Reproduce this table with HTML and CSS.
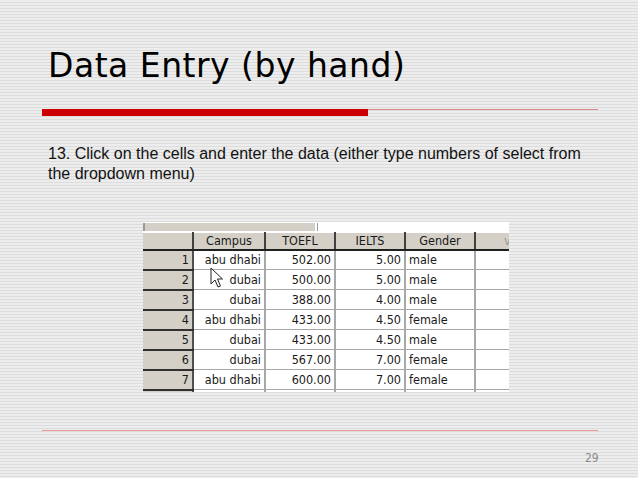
FILE: index.html
```html
<!DOCTYPE html>
<html>
<head>
<meta charset="utf-8">
<link rel="stylesheet" href="styles.css">
</head>
<body>
<div class="slide">
  <h1 class="title">Data Entry (by hand)</h1>
  <div class="rule">
    <div class="rule-thick"></div>
    <div class="rule-thin"></div>
  </div>
  <p class="text">13. Click on the cells and enter the data (either type numbers of select from the dropdown menu)</p>
  <div class="sheet">
    <div class="scrollstrip">
      <div class="scrollbar"></div>
      <div class="scrolltick"></div>
    </div>
    <table class="grid">
      <colgroup>
        <col class="c-num"><col class="c-campus"><col class="c-toefl"><col class="c-ielts"><col class="c-gender"><col class="c-var">
      </colgroup>
      <thead>
        <tr>
          <th class="corner"></th>
          <th>Campus</th>
          <th>TOEFL</th>
          <th>IELTS</th>
          <th>Gender</th>
          <th class="var">v</th>
        </tr>
      </thead>
      <tbody>
        <tr><td class="num">1</td><td class="r">abu dhabi</td><td class="r">502.00</td><td class="r">5.00</td><td class="l">male</td><td></td></tr>
        <tr><td class="num">2</td><td class="r">dubai</td><td class="r">500.00</td><td class="r">5.00</td><td class="l">male</td><td></td></tr>
        <tr><td class="num">3</td><td class="r">dubai</td><td class="r">388.00</td><td class="r">4.00</td><td class="l">male</td><td></td></tr>
        <tr><td class="num">4</td><td class="r">abu dhabi</td><td class="r">433.00</td><td class="r">4.50</td><td class="l">female</td><td></td></tr>
        <tr><td class="num">5</td><td class="r">dubai</td><td class="r">433.00</td><td class="r">4.50</td><td class="l">male</td><td></td></tr>
        <tr><td class="num">6</td><td class="r">dubai</td><td class="r">567.00</td><td class="r">7.00</td><td class="l">female</td><td></td></tr>
        <tr><td class="num">7</td><td class="r">abu dhabi</td><td class="r">600.00</td><td class="r">7.00</td><td class="l">female</td><td></td></tr>
        <tr><td class="num">8</td><td class="r">abu dhabi</td><td class="r">600.00</td><td class="r">7.00</td><td class="l">male</td><td></td></tr>
      </tbody>
    </table>
    <svg class="cursor" width="13" height="22" viewBox="0 0 13 22">
      <path d="M1 1 L1 17 L5 13 L8 20 L10.5 19 L7.5 12 L12.5 12 Z" fill="#fff" stroke="#222" stroke-width="1" stroke-linejoin="miter"/>
    </svg>
  </div>
  <div class="footer-rule"></div>
  <div class="pagenum">29</div>
</div>
</body>
</html>
```

FILE: styles.css
```css
html, body {
  margin: 0;
  padding: 0;
}
body {
  width: 638px;
  height: 478px;
  overflow: hidden;
  background: repeating-linear-gradient(to bottom, #ededed 0px, #ededed 2px, #dcdcdc 2px, #dcdcdc 3px);
}
.slide {
  position: relative;
  width: 638px;
  height: 478px;
  padding-top: 47px;
  box-sizing: border-box;
}
.title {
  margin: 0 0 0 48px;
  font-family: "DejaVu Sans", sans-serif;
  font-weight: normal;
  font-size: 33px;
  letter-spacing: 0.5px;
  line-height: 38px;
  color: #000;
}
.rule {
  display: flex;
  align-items: flex-start;
  margin: 24px 0 0 42px;
  width: 556px;
}
.rule-thick {
  width: 326px;
  height: 7px;
  background: #cc0000;
}
.rule-thin {
  flex: 1;
  height: 1px;
  background: #d88a8a;
}
.text {
  margin: 28px 0 0 48px;
  width: 545px;
  font-family: "Liberation Sans", Arial, sans-serif;
  font-size: 16px;
  line-height: 20px;
  color: #111;
}
.sheet {
  position: relative;
  margin: 38px 0 0 143px;
  width: 366px;
  height: 170px;
  overflow: hidden;
  background: #fff;
}
.scrollstrip {
  display: flex;
  height: 10px;
  background: #fff;
}
.scrollbar {
  width: 172px;
  height: 8px;
  margin-top: 1px;
  background: #d4d0c8;
  border-left: 2px solid #9a9a9a;
  box-sizing: border-box;
}
.scrolltick {
  width: 1px;
  height: 8px;
  margin: 1px 0 0 2px;
  background: #9a9a9a;
}
.grid {
  border-collapse: collapse;
  table-layout: fixed;
  width: 420px;
  font-family: "DejaVu Sans Condensed", "DejaVu Sans", sans-serif;
  font-size: 12.5px;
  color: #1a1a1a;
}
.c-num { width: 50px; }
.c-campus { width: 72px; }
.c-toefl { width: 70px; }
.c-ielts { width: 70px; }
.c-gender { width: 70px; }
.c-var { width: 88px; }
.grid th {
  height: 17px;
  padding: 0;
  background: #d4d0c8;
  font-weight: normal;
  text-align: center;
  border-right: 2px solid #404040;
  border-bottom: 2px solid #202020;
  border-top: 1px solid #ffffff;
  box-sizing: border-box;
  white-space: nowrap;
  overflow: hidden;
}
.grid th.var {
  color: #999;
  text-align: left;
  padding-left: 28px;
}
.grid td {
  height: 20px;
  padding: 0 3px;
  border-right: 2px solid #a8a8a8;
  border-bottom: 1px solid #a8a8a8;
  box-sizing: border-box;
  white-space: nowrap;
  overflow: hidden;
}
.grid td.num {
  background: #d4d0c8;
  text-align: right;
  border-right: 2px solid #505050;
  border-bottom: 2px solid #303030;
}
.grid td.r { text-align: right; }
.grid td.l { text-align: left; }
.cursor {
  position: absolute;
  left: 67px;
  top: 45px;
}
.footer-rule {
  margin: 38px 0 0 42px;
  width: 556px;
  height: 1px;
  background: #e89a9a;
}
.pagenum {
  margin: 20px 0 0 585px;
  font-family: "DejaVu Sans Condensed", "DejaVu Sans", sans-serif;
  font-size: 12px;
  line-height: 14px;
  color: #8a8a8a;
}
```
